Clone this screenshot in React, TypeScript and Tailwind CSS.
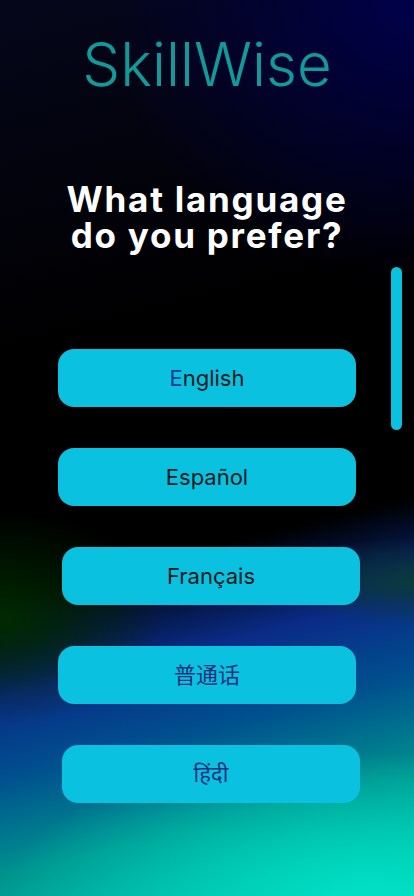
import React from 'react'

const languages = [
  { id: 'en', label: 'English', offset: 'ml-[58px]' },
  { id: 'es', label: 'Español', offset: 'ml-[58px]' },
  { id: 'fr', label: 'Français', offset: 'ml-[62px]' },
  { id: 'zh', label: '普通话', offset: 'ml-[58px]' },
  { id: 'hi', label: 'हिंदी', offset: 'ml-[62px]' },
]

function LanguageButton({ id, label, offset }: { id: string; label: string; offset: string }) {
  const blue = id === 'zh' || id === 'hi'
  return (
    <button
      className={`${offset} w-[298px] h-[58px] rounded-[16px] bg-[#0bc1e0] flex items-center justify-center text-[22px] font-['Inter','Noto_Sans','Noto_Sans_CJK_SC',sans-serif] ${
        blue ? 'text-[#1a3180]' : 'text-[#071a22]'
      }`}
    >
      {id === 'en' ? (
        <span>
          <span className="text-[#0d3a8e]">E</span>nglish
        </span>
      ) : (
        label
      )}
    </button>
  )
}

export default function App() {
  return (
    <div className="relative h-screen w-full overflow-hidden flex flex-col items-center font-['Inter',sans-serif] bg-[radial-gradient(ellipse_75%_32%_at_100%_0%,#00004a_0%,transparent_100%),radial-gradient(ellipse_90%_16%_at_90%_100%,#00e0c4_0%,transparent_100%),radial-gradient(ellipse_40%_12%_at_0%_69%,#002a00_0%,transparent_100%),radial-gradient(ellipse_35%_5%_at_100%_65%,#0a3a3a_0%,transparent_100%),linear-gradient(166deg,#05061a_0%,#000000_36%,#000000_60%,#0a2c88_70%,#00508e_78%,#00948e_88%,#00c8b0_100%)]">
      <h1 className="mt-[34px] text-[60px] font-light leading-none text-[#109a9a]">SkillWise</h1>
      <h2 className="mt-[87px] text-[35px] font-bold leading-[36px] tracking-[0.05em] text-white text-center">
        What language
        <br />
        do you prefer?
      </h2>

      <div className="mt-[96px] w-full flex flex-col gap-[41px]">
        {languages.map(l => (
          <LanguageButton key={l.id} {...l} />
        ))}
      </div>

      <div className="absolute left-[391px] top-[267px] w-[11px] h-[163px] rounded-full bg-[#0bc1e0]" />
    </div>
  )
}
